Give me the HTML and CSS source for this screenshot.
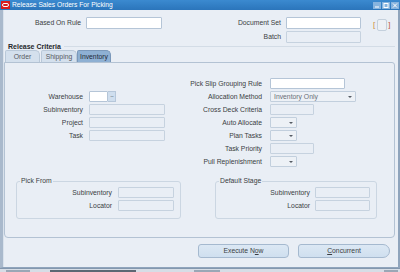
FILE: index.html
```html
<!DOCTYPE html>
<html lang="en">
<head>
<meta charset="utf-8">
<title>Release Sales Orders For Picking</title>
<link rel="stylesheet" href="styles.css">
</head>
<body>
<div class="titlebar">
  <svg class="appicon" width="9" height="8" viewBox="0 0 9 8"><rect width="9" height="8" fill="#d81e1e"/><rect x="1.5" y="2.5" width="6" height="3" rx="1.5" fill="none" stroke="#fff" stroke-width="1"/></svg>
  <span class="title">Release Sales Orders For Picking</span>
  <div class="wbtns">
    <svg width="8" height="7" viewBox="0 0 8 7"><rect width="8" height="7" fill="#86b3de"/><rect x="2" y="4.5" width="4" height="1" fill="#fff"/></svg>
    <svg width="8" height="7" viewBox="0 0 8 7"><rect width="8" height="7" fill="#86b3de"/><rect x="2" y="1.5" width="4" height="4" fill="none" stroke="#fff" stroke-width="1"/></svg>
    <svg width="8" height="7" viewBox="0 0 8 7"><rect width="8" height="7" fill="#86b3de"/><path d="M2 1.5 L6 5.5 M6 1.5 L2 5.5" stroke="#fff" stroke-width="1"/></svg>
  </div>
</div>
<div class="frame">
  <div class="hdr">
    <span class="lbl">Based On Rule</span>
    <span class="fld"></span>
    <span class="lbl">Document Set</span>
    <span class="fld"></span>
    <span class="dff"><span class="br1">[</span><span class="dffbox"></span><span class="br2">]</span></span>
    <span></span>
    <span></span>
    <span class="lbl">Batch</span>
    <span class="fld ro"></span>
    <span></span>
  </div>
  <div class="sechead"><span class="sectitle">Release Criteria</span><span class="rule"></span></div>
  <div class="tabs">
    <div class="tab t-order">Order</div>
    <div class="tab t-ship">Shipping</div>
    <div class="tab t-inv on">Inventory</div>
  </div>
  <div class="panel">
    <div class="form">
      <span></span><span></span>
      <span class="lbl">Pick Slip Grouping Rule</span><span class="fld w75"></span>

      <span class="lbl">Warehouse</span>
      <span class="lov"><span class="fld lovbox"></span><span class="lovbtn">···</span></span>
      <span class="lbl">Allocation Method</span>
      <span class="sel w86"><span class="seltxt">Inventory Only</span><i class="caret"></i></span>

      <span class="lbl">Subinventory</span><span class="fld ro w76"></span>
      <span class="lbl">Cross Deck Criteria</span><span class="fld ro w44"></span>

      <span class="lbl">Project</span><span class="fld ro w76"></span>
      <span class="lbl">Auto Allocate</span><span class="sel w27"><i class="caret"></i></span>

      <span class="lbl">Task</span><span class="fld ro w76"></span>
      <span class="lbl">Plan Tasks</span><span class="sel w27"><i class="caret"></i></span>

      <span></span><span></span>
      <span class="lbl">Task Priority</span><span class="fld ro w44"></span>

      <span></span><span></span>
      <span class="lbl">Pull Replenishment</span><span class="sel w27"><i class="caret"></i></span>
    </div>
    <div class="groups">
      <fieldset class="grp g-pick">
        <legend>Pick From</legend>
        <div class="grows">
          <span class="lbl">Subinventory</span><span class="fld ro"></span>
          <span class="lbl">Locator</span><span class="fld ro"></span>
        </div>
      </fieldset>
      <fieldset class="grp g-stage">
        <legend>Default Stage</legend>
        <div class="grows">
          <span class="lbl">Subinventory</span><span class="fld ro"></span>
          <span class="lbl">Locator</span><span class="fld ro"></span>
        </div>
      </fieldset>
    </div>
  </div>
  <div class="actions">
    <button class="btn b-exec">Execute N<u>o</u>w</button>
    <button class="btn b-conc"><u>C</u>oncurrent</button>
  </div>
</div>
<div class="below">
  <span class="mk m1"></span><span class="mk m2"></span><span class="mk m3"></span><span class="mk m4"></span>
</div>
</body>
</html>
```

FILE: styles.css
```css
html, body {
  margin: 0;
  padding: 0;
}
body {
  width: 400px;
  height: 272px;
  overflow: hidden;
  background: #e9eef5;
  font-family: "Liberation Sans", Arial, sans-serif;
  font-size: 6.8px;
  color: #3a3d42;
}

/* title bar */
.titlebar {
  height: 10px;
  display: flex;
  align-items: center;
  background: linear-gradient(#3b8ad0, #2b75bb);
  border-bottom: 0;
}
.appicon {
  margin-left: 1px;
  flex: none;
}
.title {
  margin-left: 2px;
  color: #fff;
  font-size: 6.7px;
  line-height: 10px;
}
.wbtns {
  margin-left: auto;
  margin-right: 1px;
  display: flex;
  gap: 1px;
}
.wbtns svg {
  display: block;
}

/* window frame */
.frame {
  box-sizing: border-box;
  height: 258px;
  border-left: 3px solid #a9b9cc;
  border-right: 2px solid #8fa4bc;
  border-bottom: 1px solid #8fa4bc;
  box-shadow: inset 1px 0 #d9e2ec;
  background: #e9eef5;
}

/* header fields */
.hdr {
  display: grid;
  grid-template-columns: 78px 76px 114px 75px 1fr;
  grid-template-rows: 12px 12px;
  column-gap: 5px;
  row-gap: 2px;
  padding-top: 7px;
}
.lbl {
  text-align: right;
  white-space: nowrap;
  line-height: 11px;
  color: #3a3d42;
}
.hdr .lbl {
  line-height: 12px;
}
.fld {
  display: block;
  box-sizing: border-box;
  background: #fff;
  border: 1px solid #b5c5d7;
  border-radius: 1px;
  height: 100%;
}
.fld.ro {
  background: #e9eef5;
  border-color: #c6d2df;
}
.dff {
  display: flex;
  align-items: center;
  padding-left: 7px;
  height: 13px;
  margin-top: 1px;
  font-size: 8px;
  line-height: 12px;
}
.br1 { color: #c98a3b; }
.br2 { color: #c25a4a; margin-left: 1px; }
.dffbox {
  width: 10px;
  height: 12px;
  margin-left: 2px;
  box-sizing: border-box;
  border: 1px solid #c4d0dd;
  border-radius: 2px;
  background: #edf1f6;
}

/* section heading */
.sechead {
  display: flex;
  align-items: center;
  height: 7px;
  padding-left: 5px;
  margin-right: 3px;
}
.sectitle {
  font-weight: bold;
  font-size: 7px;
  line-height: 7px;
  color: #25282c;
}
.rule {
  flex: 1;
  height: 1px;
  margin-left: 3px;
  background: #d3dce6;
}

/* tabs */
.tabs {
  display: flex;
  height: 12px;
  padding-left: 2px;
}
.tab {
  box-sizing: border-box;
  height: 12px;
  line-height: 11px;
  text-align: center;
  background: #d4e0ed;
  border: 1px solid #b9c8d8;
  border-bottom: 0;
  border-radius: 2px 5px 0 0;
  color: #55595f;
}
.t-order { width: 35px; }
.t-ship { width: 36px; margin-left: 1px; }
.t-inv { width: 34px; margin-left: 0; }
.tab.on {
  background: #8eb0d3;
  border-color: #7a98ba;
  color: #1f2a38;
}

/* main panel */
.panel {
  box-sizing: border-box;
  height: 176px;
  margin-left: 1px;
  margin-right: 3px;
  border: 1px solid #b3c2d3;
  border-radius: 0 3px 4px 4px;
  padding-top: 15px;
}
.form {
  display: grid;
  grid-template-columns: 78px 76px 93px 1fr;
  grid-template-rows: repeat(7, 11px);
  column-gap: 6px;
  row-gap: 2px;
}
.form .lbl:nth-child(4n+3) {
  padding-right: 2px;
}
.w75 { width: 75px; }
.w76 { width: 76px; }
.w44 { width: 44px; }
.w86 { width: 86px; }
.w27 { width: 27px; }

.lov {
  display: flex;
  height: 11px;
}
.lovbox {
  width: 19px;
  height: 11px;
}
.lovbtn {
  width: 8px;
  height: 11px;
  box-sizing: border-box;
  background: #cfdeee;
  border: 1px solid #b6c7da;
  border-left: 0;
  font-size: 6px;
  line-height: 8px;
  text-align: center;
  color: #2d3640;
  letter-spacing: -1px;
}

.sel {
  box-sizing: border-box;
  display: flex;
  align-items: center;
  height: 11px;
  padding: 0 3px 0 3px;
  background: #edf1f6;
  border: 1px solid #c2cfdd;
  border-radius: 1px;
}
.seltxt {
  color: #6a6f76;
  line-height: 9px;
}
.caret {
  margin-left: auto;
  width: 0;
  height: 0;
  border-left: 2px solid transparent;
  border-right: 2px solid transparent;
  border-top: 2px solid #555b63;
}

/* group boxes */
.groups {
  display: flex;
  margin-top: 10px;
  padding-left: 11px;
  gap: 34px;
}
.grp {
  margin: 0;
  padding: 2px 6px 7px 0;
  border: 1px solid #cbd6e2;
  border-radius: 3px;
  min-width: 0;
}
.grp legend {
  padding: 0 1px;
  margin-left: 3px;
  font-size: 6.8px;
  line-height: 8px;
  color: #3a3d42;
}
.g-pick { width: 165px; box-sizing: border-box; }
.g-stage { width: 162px; box-sizing: border-box; }
.grows {
  display: grid;
  grid-template-rows: 11px 11px;
  row-gap: 2px;
  column-gap: 6px;
}
.g-pick .grows { grid-template-columns: 1fr 56px; }
.g-stage .grows { grid-template-columns: 1fr 55px; column-gap: 5px; }

/* buttons */
.actions {
  display: flex;
  justify-content: flex-end;
  gap: 9px;
  margin-top: 6px;
  padding-right: 8px;
}
.btn {
  box-sizing: border-box;
  height: 14px;
  padding: 0;
  font-family: "Liberation Sans", Arial, sans-serif;
  font-size: 6.8px;
  line-height: 12px;
  color: #3a3d42;
  background: linear-gradient(#dce8f4, #cfdfef);
  border: 1px solid #a5b9cf;
  border-radius: 3px 4px 4px 3px;
}
.b-exec { width: 91px; }
.b-conc { width: 92px; border-radius: 3px 7px 7px 3px; }

/* area below the window */
.below {
  position: relative;
  height: 4px;
  background: #d6dde6;
  border-top: 1px solid #8397ae;
  display: flex;
}
.mk {
  display: block;
  height: 2px;
  margin-top: 1px;
  background: #9aa7b6;
}
.m1 { width: 24px; margin-left: 6px; }
.m2 { width: 86px; margin-left: 20px; background: #5d6773; }
.m3 { width: 26px; margin-left: 58px; }
.m4 { width: 14px; margin-left: 164px; }
```
